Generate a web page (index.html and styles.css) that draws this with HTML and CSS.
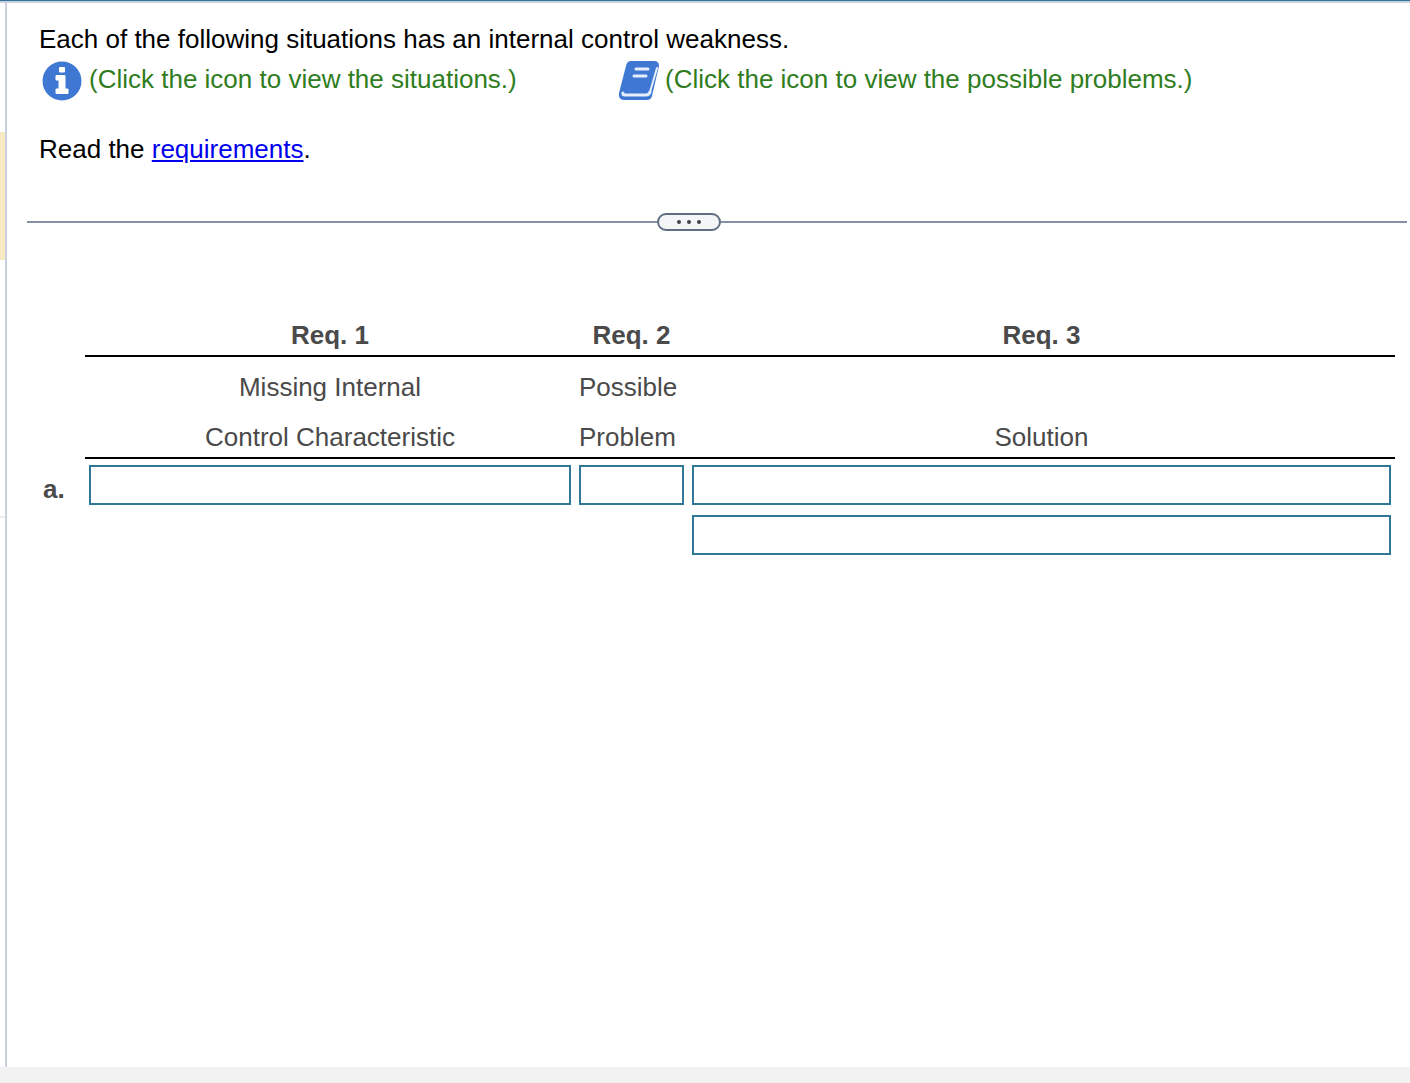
FILE: index.html
```html
<!DOCTYPE html>
<html lang="en">
<head>
    <meta charset="UTF-8">
    <meta name="viewport" content="width=device-width, initial-scale=1.0">
    <title>Internal Control Weakness</title>
    <link rel="stylesheet" href="styles.css">
</head>
<body>
    <div class="workspace">
        <div class="side-rail">
            <div class="rail-current"></div>
            <div class="rail-line"></div>
        </div>

        <main class="exercise">
            <section class="question">
                <p>Each of the following situations has an internal control weakness.</p>
                <div class="popup-links">
                    <button type="button" class="popup-link">
                        <svg class="popup-icon" viewBox="0 0 40 40" aria-hidden="true">
                            <circle cx="20" cy="20" r="19.5" fill="#3f78d3"/>
                            <path fill="#fff" stroke="#fff" stroke-linejoin="round" d="M17.500 6.500h5v4.500h-5zM14 14.500h9v13.500h3v4.500h-12v-4.500h3v-9h-3z"/>
                        </svg>
                        <span>(Click the icon to view the situations.)</span>
                    </button>
                    <button type="button" class="popup-link">
                        <svg class="popup-icon" viewBox="0 0 40 40" aria-hidden="true">
                            <path fill="#3f78d3" d="M13 0h23q5 0 5 5l-7 30q-1 4-5 4H6q-6 0-5-7L8 5q1-5 5-5z"/>
                            <path fill="none" stroke="#e6eefb" stroke-width="2" stroke-linecap="round" d="M39 7l-7 24"/>
                            <path fill="none" stroke="#e6eefb" stroke-width="3" stroke-linecap="round" stroke-linejoin="round" d="M32 31q-1 3-4 3H7q-3 0-2-2"/>
                            <path fill="none" stroke="#e6eefb" stroke-width="3" stroke-linecap="round" d="M18 8h12M16 15h12"/>
                        </svg>
                        <span>(Click the icon to view the possible problems.)</span>
                    </button>
                </div>
                <p class="read-line">Read the <a href="#requirements">requirements</a>.</p>
            </section>

            <div class="divider">
                <button type="button" class="divider-handle" aria-label="Resize question">
                    <span class="dot"></span>
                    <span class="dot"></span>
                    <span class="dot"></span>
                </button>
            </div>

            <section class="answer" id="requirements">
                <table class="answer-table">
                    <colgroup>
                        <col class="col-label">
                        <col class="col-missing">
                        <col class="col-problem">
                        <col class="col-solution">
                    </colgroup>
                    <thead>
                        <tr class="ruled-row">
                            <td></td>
                            <th scope="col">Req. 1</th>
                            <th scope="col">Req. 2</th>
                            <th scope="col">Req. 3</th>
                        </tr>
                        <tr class="title-row">
                            <td></td>
                            <td>Missing Internal</td>
                            <td class="problem-title">Possible</td>
                            <td></td>
                        </tr>
                        <tr class="ruled-row">
                            <td></td>
                            <td>Control Characteristic</td>
                            <td class="problem-title">Problem</td>
                            <td>Solution</td>
                        </tr>
                    </thead>
                    <tbody>
                        <tr>
                            <th scope="row" class="row-label">a.</th>
                            <td><input type="text" aria-label="Missing internal control characteristic"></td>
                            <td><input type="text" aria-label="Possible problem"></td>
                            <td><input type="text" aria-label="Solution, line 1"></td>
                        </tr>
                        <tr>
                            <td></td>
                            <td></td>
                            <td></td>
                            <td><input type="text" aria-label="Solution, line 2"></td>
                        </tr>
                    </tbody>
                </table>
            </section>
        </main>
    </div>
    <footer class="bottom-bar"></footer>
</body>
</html>
```

FILE: styles.css
```css
* {
    box-sizing: border-box;
}
body {
    margin: 0;
    min-height: 100vh;
    display: flex;
    flex-direction: column;
    font-family: Arial, "Liberation Sans", sans-serif;
    font-size: 26px;
    line-height: 40px;
    color: #000;
    background-color: #fff;
    border-top: 1px solid #2f7698;
}
.workspace {
    flex: 1;
    display: flex;
    border-top: 2px solid #cbd0de;
}
.side-rail {
    width: 5px;
    padding-top: 129px;
}
.rail-current {
    height: 128px;
    background-color: #f8eac3;
}
.rail-line {
    margin-top: 256px;
    height: 2px;
    background-color: #ececec;
}
.exercise {
    flex: 1;
    padding: 16px 3px 0 20px;
    border-left: 2px solid #cbd0de;
}
.question {
    padding: 0 12px;
}
.question p {
    margin: 0;
}
.question .read-line {
    margin-top: 28px;
}
.question a {
    color: #0000ee;
    text-underline-offset: 2px;
    text-decoration-thickness: 2px;
}

/* icon links */
.popup-links {
    display: grid;
    grid-template-columns: 576px 1fr;
    padding-left: 3px;
}
.popup-link {
    display: flex;
    align-items: flex-start;
    gap: 7px;
    padding: 0;
    border: none;
    background: none;
    font: inherit;
    color: #2f7d1e;
    text-align: left;
    cursor: pointer;
}
.popup-icon {
    width: 40px;
    height: 40px;
    margin-top: 2px;
    flex-shrink: 0;
    overflow: visible;
}

/* divider with handle */
.divider {
    display: flex;
    align-items: center;
    margin-top: 44px;
}
.divider::before,
.divider::after {
    content: "";
    flex: 1;
    height: 2px;
    background-color: #8490a3;
}
.divider::before {
    flex: 0 0 630px;
}
.divider-handle {
    display: flex;
    align-items: center;
    justify-content: center;
    gap: 6px;
    width: 64px;
    height: 18px;
    padding: 0;
    border: 2px solid #5f6e80;
    border-radius: 9px;
    background-color: #f3f5f7;
    cursor: row-resize;
}
.dot {
    width: 4px;
    height: 4px;
    border-radius: 50%;
    background-color: #444;
}

/* answer table */
.answer {
    padding: 84px 12px 0 12px;
    color: #4a4a4a;
}
.answer-table {
    width: 100%;
    table-layout: fixed;
    border-collapse: separate;
    border-spacing: 0;
    text-align: center;
}
.answer-table th,
.answer-table td {
    padding: 6px 4px 4px;
}
.answer-table thead th,
.answer-table thead td {
    padding: 0 4px;
}
.col-label {
    width: 46px;
}
.col-missing {
    width: 490px;
}
.col-problem {
    width: 113px;
}
.title-row {
    line-height: 60px;
}
.ruled-row th,
.ruled-row td + td {
    border-bottom: 2px solid #000;
}
.answer-table .problem-title {
    text-align: left;
}
.answer-table .row-label {
    padding-bottom: 0;
    text-align: left;
    vertical-align: bottom;
}
.answer-table input {
    display: block;
    width: 100%;
    height: 40px;
    padding: 0 8px;
    border: 2px solid #317896;
    border-radius: 0;
    background-color: #fff;
    font: inherit;
    color: inherit;
}
.bottom-bar {
    height: 16px;
    background-color: #f2f2f2;
}
```
